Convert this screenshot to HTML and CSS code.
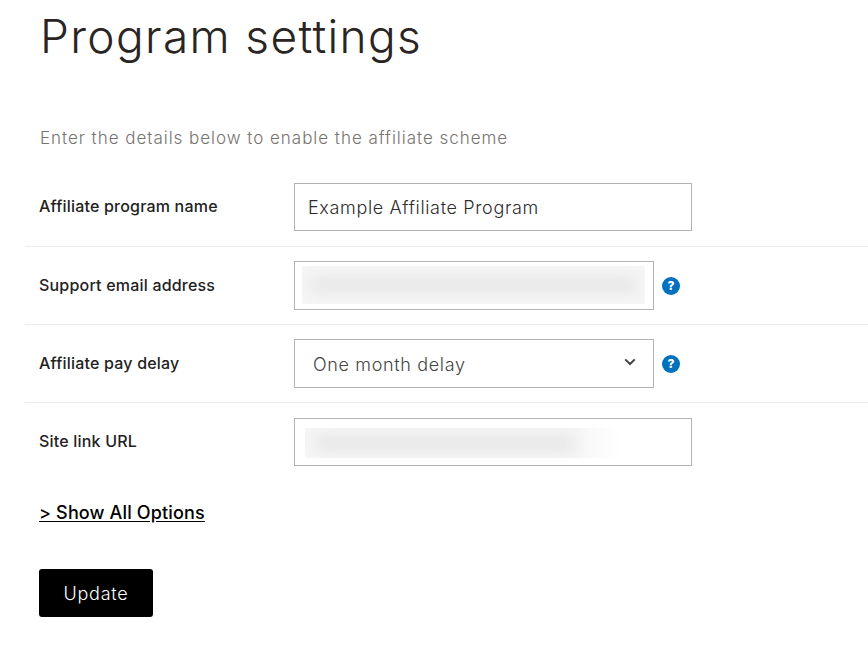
FILE: index.html
```html
<!DOCTYPE html>
<html lang="en">
<head>
    <meta charset="UTF-8">
    <meta name="viewport" content="width=device-width, initial-scale=1.0">
    <title>Program settings</title>
    <link rel="stylesheet" href="styles.css">
</head>
<body>
    <div class="content">
        <h1>Program settings</h1>
        <p class="intro">Enter the details below to enable the affiliate scheme</p>
    </div>

    <form class="settings-form">
        <div class="form-row row-first">
            <label for="program-name">Affiliate program name</label>
            <input class="field field-wide" type="text" id="program-name" value="Example Affiliate Program">
        </div>

        <div class="form-row">
            <label>Support email address</label>
            <div class="field field-narrow">
                <div class="redacted redacted-email"><div class="smudge"></div></div>
            </div>
            <span class="help-icon">?</span>
        </div>

        <div class="form-row">
            <label for="pay-delay">Affiliate pay delay</label>
            <div class="select-wrap">
                <select class="field field-narrow" id="pay-delay">
                    <option>One month delay</option>
                </select>
                <svg class="chevron" width="12" height="8" viewBox="0 0 12 8">
                    <path d="M1.2 1.4 6 6l4.8-4.6" fill="none" stroke="#444" stroke-width="2"/>
                </svg>
            </div>
            <span class="help-icon">?</span>
        </div>

        <div class="form-row row-last">
            <label>Site link URL</label>
            <div class="field field-wide">
                <div class="redacted redacted-url"><div class="smudge"></div></div>
            </div>
        </div>
    </form>

    <div class="content">
        <a class="show-all" href="#">&gt; Show All Options</a>
        <button class="update-btn" type="button">Update</button>
    </div>
</body>
</html>
```

FILE: styles.css
```css
* {
    box-sizing: border-box;
}
body {
    margin: 0;
    background: #fff;
    font-family: "Inter", "Open Sans", sans-serif;
    color: #222;
}
.content {
    padding-left: 40px;
}
h1 {
    margin: 0;
    padding-top: 8px;
    font-size: 46px;
    line-height: 56px;
    font-weight: 300;
    letter-spacing: 1.35px;
    color: #2a2522;
}
.intro {
    margin: 62px 0 0;
    font-size: 17px;
    line-height: 24px;
    font-weight: 300;
    letter-spacing: 0.97px;
    color: #77736f;
}
.settings-form {
    margin: 20px 0 0 25px;
}
.form-row {
    display: flex;
    align-items: center;
    gap: 8px;
    height: 78px;
    padding-left: 14px;
    border-bottom: 1px solid #e9edf0;
}
.row-first {
    height: 77px;
    padding-bottom: 2px;
}
.row-last {
    border-bottom: 0;
}
.form-row label {
    width: 255px;
    margin-right: -8px;
    font-size: 16px;
    font-weight: 500;
    letter-spacing: 0.2px;
    color: #222;
    position: relative;
    top: -1px;
}
.field {
    display: block;
    height: 49px;
    border: 1px solid #b3b3b3;
    border-radius: 0;
    background: #fff;
    font-family: inherit;
    font-size: 18px;
    font-weight: 300;
    letter-spacing: 0.65px;
}
.field-wide {
    width: 398px;
    height: 48px;
}
.field-narrow {
    width: 360px;
}
input.field {
    padding: 0 13px;
    color: #2d2d2d;
    outline: none;
}
select.field {
    appearance: none;
    padding: 2px 18px 0;
    color: #444;
    outline: none;
}
.select-wrap {
    position: relative;
}
.chevron {
    position: absolute;
    right: 18px;
    top: 19px;
}
.redacted {
    overflow: hidden;
    background: #f6f6f6;
}
.redacted-email {
    width: 343px;
    height: 38px;
    margin: 4px 0 0 7px;
}
.redacted-url {
    width: 315px;
    height: 30px;
    margin: 9px 0 0 10px;
    background: linear-gradient(to right, #f6f6f6 85%, #fff);
}
.smudge {
    height: 18px;
    margin: 10px 8px 0;
    background: #e8e8e8;
    filter: blur(7px);
}
.redacted-url .smudge {
    margin: 6px 45px 0 10px;
}
.help-icon {
    display: flex;
    align-items: center;
    justify-content: center;
    width: 18px;
    height: 18px;
    border-radius: 50%;
    background: #0071bc;
    color: #fff;
    font-size: 12px;
    font-weight: 800;
    line-height: 1;
}
.show-all {
    display: block;
    width: fit-content;
    margin: 20px 0 0 -1px;
    font-size: 18px;
    line-height: 24px;
    font-weight: 500;
    letter-spacing: 0.15px;
    color: #000;
    text-underline-offset: 2px;
}
.update-btn {
    display: block;
    width: 114px;
    height: 48px;
    margin: 44px 0 0 -1px;
    border: 0;
    border-radius: 3px;
    background: #000;
    color: #fff;
    font-family: inherit;
    font-size: 18px;
    font-weight: 300;
    letter-spacing: 0.75px;
    cursor: pointer;
}
```
